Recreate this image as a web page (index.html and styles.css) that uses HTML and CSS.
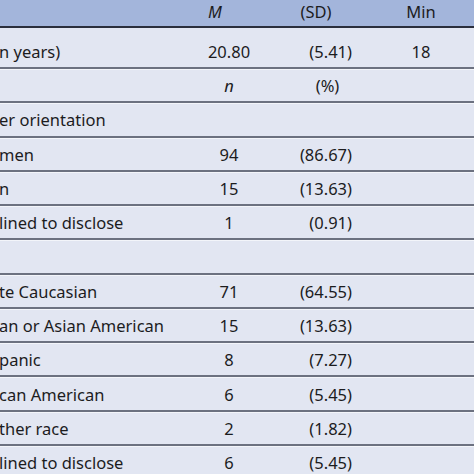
FILE: index.html
```html
<!DOCTYPE html>
<html lang="en">
<head>
<meta charset="utf-8">
<title>Participant characteristics</title>
<link rel="stylesheet" href="styles.css">
</head>
<body>
<div class="table">
  <div class="row head">
    <div class="cell label"></div>
    <div class="cell num m-head"><i>M</i></div>
    <div class="cell num sd-head">(SD)</div>
    <div class="cell num min">Min</div>
  </div>
  <div class="row first">
    <div class="cell label">n years)</div>
    <div class="cell num">20.80</div>
    <div class="cell num sd">(5.41)</div>
    <div class="cell num min">18</div>
  </div>
  <div class="row">
    <div class="cell label"></div>
    <div class="cell num"><i>n</i></div>
    <div class="cell num pct-head">(%)</div>
    <div class="cell num min"></div>
  </div>
  <div class="row">
    <div class="cell label">er orientation</div>
    <div class="cell num"></div>
    <div class="cell num sd"></div>
    <div class="cell num min"></div>
  </div>
  <div class="row">
    <div class="cell label sub">men</div>
    <div class="cell num">94</div>
    <div class="cell num sd">(86.67)</div>
    <div class="cell num min"></div>
  </div>
  <div class="row">
    <div class="cell label sub">n</div>
    <div class="cell num">15</div>
    <div class="cell num sd">(13.63)</div>
    <div class="cell num min"></div>
  </div>
  <div class="row">
    <div class="cell label sub">lined to disclose</div>
    <div class="cell num">1</div>
    <div class="cell num sd">(0.91)</div>
    <div class="cell num min"></div>
  </div>
  <div class="row">
    <div class="cell label"></div>
    <div class="cell num"></div>
    <div class="cell num sd"></div>
    <div class="cell num min"></div>
  </div>
  <div class="row">
    <div class="cell label sub">te Caucasian</div>
    <div class="cell num">71</div>
    <div class="cell num sd">(64.55)</div>
    <div class="cell num min"></div>
  </div>
  <div class="row">
    <div class="cell label sub">an or Asian American</div>
    <div class="cell num">15</div>
    <div class="cell num sd">(13.63)</div>
    <div class="cell num min"></div>
  </div>
  <div class="row">
    <div class="cell label sub">panic</div>
    <div class="cell num">8</div>
    <div class="cell num sd">(7.27)</div>
    <div class="cell num min"></div>
  </div>
  <div class="row">
    <div class="cell label sub">can American</div>
    <div class="cell num">6</div>
    <div class="cell num sd">(5.45)</div>
    <div class="cell num min"></div>
  </div>
  <div class="row">
    <div class="cell label sub">ther race</div>
    <div class="cell num">2</div>
    <div class="cell num sd">(1.82)</div>
    <div class="cell num min"></div>
  </div>
  <div class="row">
    <div class="cell label sub">lined to disclose</div>
    <div class="cell num">6</div>
    <div class="cell num sd">(5.45)</div>
    <div class="cell num min"></div>
  </div>
</div>
</body>
</html>
```

FILE: styles.css
```css
html, body {
  margin: 0;
  padding: 0;
  background: #e2e6f2;
  overflow: hidden;
}

.table {
  width: 474px;
  font-family: "Noto Sans", Lato, sans-serif;
  font-size: 16.5px;
  color: #1c1c1e;
}

.row {
  display: grid;
  grid-template-columns: 190px 78px 106px 100px;
  align-items: center;
  height: 34.27px;
  box-sizing: border-box;
  border-bottom: 2px solid #6c7180;
  border-top: 1px solid #f3f5fa;
  background: #e2e6f2;
}

.row.head {
  height: 28px;
  align-items: start;
  background: #a3b5db;
  border-top: 0;
  border-bottom: 2px solid #2a2e3c;
  line-height: 23px;
}

.row.first {
  height: 41px;
  padding-top: 8px;
  border-top: 0;
}

.cell {
  white-space: nowrap;
}

.row:not(.head) .cell {
  overflow: hidden;
}

.label {
  text-align: left;
  margin-left: -1px;
}

.num {
  text-align: center;
}

.m-head {
  padding-right: 28px;
}

.sd {
  text-align: right;
  padding-right: 22px;
}

.sd-head {
  padding-right: 10px;
}

.pct-head {
  padding-right: 0;
  padding-left: 13px;
}

.min {
  padding-right: 6px;
}
```
